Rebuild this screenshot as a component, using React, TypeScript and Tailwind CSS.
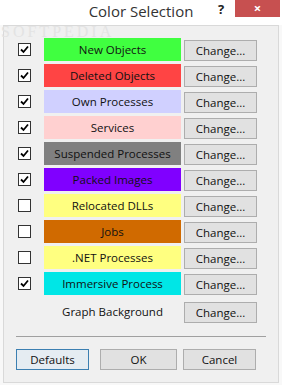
import React from "react";

const rows: { label: string; color: string | null; checked: boolean }[] = [
  { label: "New Objects", color: "#40ff40", checked: true },
  { label: "Deleted Objects", color: "#ff4444", checked: true },
  { label: "Own Processes", color: "#d0d0ff", checked: true },
  { label: "Services", color: "#ffd0d0", checked: true },
  { label: "Suspended Processes", color: "#808080", checked: true },
  { label: "Packed Images", color: "#8000ff", checked: true },
  { label: "Relocated DLLs", color: "#ffff80", checked: false },
  { label: "Jobs", color: "#d06a00", checked: false },
  { label: ".NET Processes", color: "#ffff80", checked: false },
  { label: "Immersive Process", color: "#00e6e6", checked: true },
  { label: "Graph Background", color: null, checked: false },
];

function Check({ checked }: { checked: boolean }) {
  return (
    <div className="w-[13px] h-[13px] border border-[#333] bg-white flex items-center justify-center shrink-0">
      {checked && (
        <svg width="9" height="9" viewBox="0 0 9 9">
          <path d="M1 4.5 L3.5 7 L8 1.5" stroke="#000" strokeWidth="1.8" fill="none" />
        </svg>
      )}
    </div>
  );
}

function Btn({ children, w, def }: { children: React.ReactNode; w: string; def?: boolean }) {
  return (
    <div
      className={`${w} h-[21px] flex items-center justify-center text-[11.5px] text-[#111] border ${
        def ? "border-[#3c7fb1] bg-[#e5ecf2]" : "border-[#adadad] bg-[#e1e1e1]"
      }`}
    >
      {children}
    </div>
  );
}

export default function App() {
  return (
    <div
      className="w-[282px] h-[385px] bg-[#f8f8f8] relative overflow-hidden flex flex-col"
      style={{ fontFamily: '"Open Sans", "Noto Sans", sans-serif' }}
    >
      <div className="h-[25px] shrink-0 bg-white relative flex justify-center">
        <span className="text-[15px] text-[#333] leading-[22px]">Color Selection</span>
        <span className="absolute left-[218px] top-[1px] text-[13px] font-bold text-[#222] leading-[16px]">?</span>
        <div className="absolute left-[235px] top-0 w-[45px] h-[17px] bg-[#c75050] flex items-center justify-center text-white text-[13px] leading-none font-bold">
          ×
        </div>
      </div>
      <div className="mx-[3px] h-[358px] border border-[#d9d9d9] bg-[#f0f0f0] flex flex-col relative">
        <div
          className="absolute left-[-3px] top-[0px] h-[12px] text-[16px] tracking-[3px] text-[#e3e3e3] leading-[12px] pointer-events-none"
          style={{ fontFamily: '"Liberation Serif", serif' }}
        >
          SOFTPEDIA
        </div>
        <div className="flex flex-col gap-[3px] pt-[12px] relative">
          {rows.map((r, i) => (
            <div key={r.label} className={`flex items-center h-[23px] ${i === 10 ? "mt-[2px]" : ""}`}>
              <div className="w-[13px] ml-[14px] mr-[13px] flex">
                {r.color && <Check checked={r.checked} />}
              </div>
              <div
                className="w-[137px] h-[23px] flex items-center justify-center text-[11.5px] text-[#111]"
                style={r.color ? { backgroundColor: r.color } : undefined}
              >
                {r.label}
              </div>
              <div className="ml-[3px] mt-[2px]">
                <Btn w="w-[73px]">Change...</Btn>
              </div>
            </div>
          ))}
        </div>
        <div className="mt-auto mb-[12px] flex flex-col">
          <div className="ml-[12px] w-[250px] h-px bg-[#a0a0a0]" />
          <div className="flex mt-[12px] ml-[12px]">
            <Btn w="w-[73px]" def>
              Defaults
            </Btn>
            <div className="ml-[11px]">
              <Btn w="w-[77px]">OK</Btn>
            </div>
            <div className="ml-[6px]">
              <Btn w="w-[73px]">Cancel</Btn>
            </div>
          </div>
        </div>
      </div>
    </div>
  );
}
